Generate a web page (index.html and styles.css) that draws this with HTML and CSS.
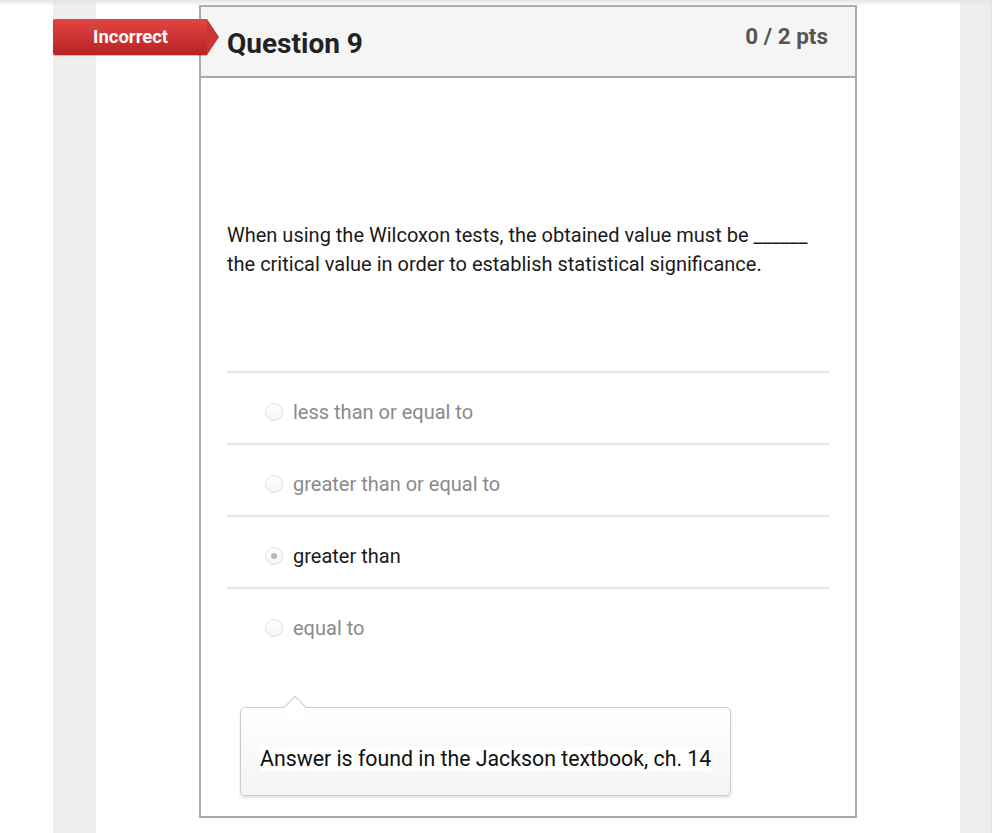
FILE: index.html
```html
<!DOCTYPE html>
<html lang="en">

<head>
  <meta charset="UTF-8">
  <meta name="viewport" content="width=device-width, initial-scale=1.0">
  <title>Question 9</title>
  <link rel="stylesheet" href="styles.css">
</head>

<body>
  <div class="page">
    <div class="rail rail-left"></div>

    <main class="main">
      <div class="question">
        <div class="badge">Incorrect</div>

        <div class="question-header">
          <h2 class="question-title">Question 9</h2>
          <span class="question-pts">0 / 2 pts</span>
        </div>

        <div class="question-body">
          <p class="question-text">When using the Wilcoxon tests, the obtained value must be ______ the critical value in order to establish statistical significance.</p>

          <div class="answers">
            <div class="answer">
              <span class="radio"></span>
              <span class="answer-label">less than or equal to</span>
            </div>
            <div class="answer">
              <span class="radio"></span>
              <span class="answer-label">greater than or equal to</span>
            </div>
            <div class="answer answer-selected">
              <span class="radio"></span>
              <span class="answer-label">greater than</span>
            </div>
            <div class="answer">
              <span class="radio"></span>
              <span class="answer-label">equal to</span>
            </div>
          </div>

          <div class="comment">
            <span class="comment-text">Answer is found in the Jackson textbook, ch. 14</span>
          </div>
        </div>
      </div>
    </main>

    <div class="rail rail-right"></div>
  </div>
</body>

</html>
```

FILE: styles.css
```css
body {
  margin: 0;
  background-color: #ffffff;
  font-family: Roboto, "Liberation Sans", sans-serif;
  color: #222222;
}

body::before {
  content: "";
  position: fixed;
  left: 0;
  right: 0;
  top: 0;
  height: 6px;
  background: linear-gradient(#e4e4e4, rgba(255, 255, 255, 0));
  z-index: 5;
}

.page {
  display: flex;
  min-height: 833px;
  padding-left: 53px;
}

.rail {
  background-color: #eeeeee;
}

.rail-left {
  width: 43px;
}

.rail-right {
  width: 32px;
  border-right: 1px solid #e2e2e2;
  box-sizing: border-box;
}

.main {
  flex: 1;
  padding: 5px 0 0 103px;
}

.question {
  position: relative;
  width: 654px;
  border: 2px solid #aaaaaa;
  background-color: #ffffff;
}

.badge {
  position: absolute;
  left: -148px;
  top: 12px;
  width: 154px;
  height: 36px;
  line-height: 36px;
  padding-left: 40px;
  box-sizing: border-box;
  background: linear-gradient(#e34444, #b92323);
  color: #ffffff;
  font-size: 18.5px;
  font-weight: bold;
  border-radius: 2px 0 0 2px;
  box-shadow: 0 1px 1px rgba(0, 0, 0, 0.25);
}

.badge::after {
  content: "";
  position: absolute;
  right: -12px;
  top: 0;
  border-top: 18px solid transparent;
  border-bottom: 18px solid transparent;
  border-left: 12px solid #cc3333;
}

.question-header {
  display: flex;
  justify-content: space-between;
  align-items: flex-start;
  height: 69px;
  padding: 0 27px 0 26px;
  background-color: #f5f5f5;
  border-bottom: 2px solid #aaaaaa;
}

.question-title {
  margin: 20px 0 0;
  font-size: 28px;
  line-height: 34px;
  font-weight: bold;
  color: #222222;
}

.question-pts {
  margin-top: 16px;
  font-size: 22.5px;
  line-height: 26px;
  font-weight: bold;
  color: #555555;
}

.question-body {
  padding: 143px 26px 20px 26px;
}

.question-text {
  margin: 0;
  width: 601px;
  font-size: 20px;
  line-height: 29px;
  color: #1a1a1a;
}

.answers {
  margin-top: 92px;
}

.answer {
  display: flex;
  align-items: center;
  gap: 10px;
  padding: 27px 0 19px 38px;
  border-top: 2px solid #e6e6e6;
  font-size: 20px;
  line-height: 24px;
  color: #8a8a8a;
}

.radio {
  position: relative;
  width: 16px;
  height: 16px;
  border: 1px solid #e4e4e4;
  border-radius: 50%;
  background: linear-gradient(#ffffff, #f4f4f4);
}

.answer-selected {
  color: #1a1a1a;
}

.answer-selected .radio::after {
  content: "";
  position: absolute;
  left: 5px;
  top: 5px;
  width: 6px;
  height: 6px;
  border-radius: 50%;
  background-color: #b8b8b8;
}

.comment {
  position: relative;
  margin: 48px 98px 0 13px;
  height: 89px;
  padding: 39px 0 0 19px;
  box-sizing: border-box;
  border: 1px solid #c8ccd0;
  border-radius: 5px;
  background: linear-gradient(#ffffff, #f3f4f5);
  box-shadow: 0 2px 3px rgba(0, 0, 0, 0.12);
}

.comment::before {
  content: "";
  position: absolute;
  left: 46px;
  top: -9px;
  width: 15px;
  height: 15px;
  background-color: #ffffff;
  border-left: 1px solid #c8ccd0;
  border-top: 1px solid #c8ccd0;
  transform: rotate(45deg);
}

.comment-text {
  font-size: 21.3px;
  line-height: 24px;
  color: #111111;
  background-color: #ffffff;
}
```
